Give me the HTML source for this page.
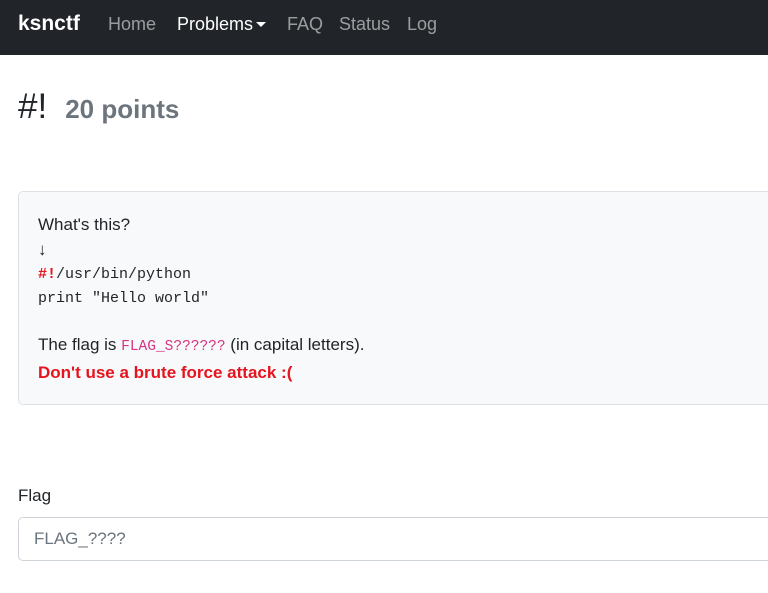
<!DOCTYPE html>
<html><head><meta charset="utf-8"><style>
*{box-sizing:border-box;margin:0;padding:0}
body{width:768px;height:593px;overflow:hidden;background:#fff;font-family:"Liberation Sans",sans-serif;color:#212529}
.nav{height:55px;background:#212529;position:relative}
.nav span{position:absolute;top:14px;font-size:18px;color:rgba(255,255,255,.55)}
.brand{left:18px!important;top:12px!important;font-size:21px!important;font-weight:bold;color:#fff!important}
.caret{display:inline-block;border-top:5px solid #fff;border-left:5px solid transparent;border-right:5px solid transparent;vertical-align:3px;margin-left:3px}
h1{position:absolute;left:18px;top:87px;font-size:35px;font-weight:500}
h1 small{font-size:26px;color:#6c757d;font-weight:bold;margin-left:18px}
.box{position:absolute;left:18px;top:191px;width:780px;height:214px;background:#f8f9fa;border:1px solid #dee2e6;border-radius:5px}
.t{position:absolute;left:38px;font-size:17px;white-space:nowrap}
.m{font-family:"Liberation Mono",monospace;font-size:15px}
.red{color:#e6141e}
code{font-family:"Liberation Mono",monospace;font-size:14.5px;color:#d63384}
.input{position:absolute;left:18px;top:517px;width:780px;height:44px;border:1px solid #ced4da;border-radius:5px;color:#6c757d;font-size:17px;padding:11px 15px}
</style></head><body>
<div class="nav">
<span class="brand">ksnctf</span>
<span style="left:108px">Home</span>
<span style="left:177px;color:#fff">Problems<i class="caret"></i></span>
<span style="left:287px">FAQ</span>
<span style="left:339px">Status</span>
<span style="left:407px">Log</span>
</div>
<h1>#!<small>20 points</small></h1>
<div class="box"></div>
<div class="t" style="top:215px">What's this?</div>
<div class="t" style="top:240px">↓</div>
<div class="t m" style="top:266px"><b class="red">#!</b>/usr/bin/python</div>
<div class="t m" style="top:290px">print "Hello world"</div>
<div class="t" style="top:335px">The flag is <code>FLAG_S??????</code> (in capital letters).</div>
<div class="t red" style="top:363px;font-weight:bold">Don't use a brute force attack :(</div>
<div class="t" style="left:18px;top:486px">Flag</div>
<div class="input">FLAG_????</div>
</body></html>
